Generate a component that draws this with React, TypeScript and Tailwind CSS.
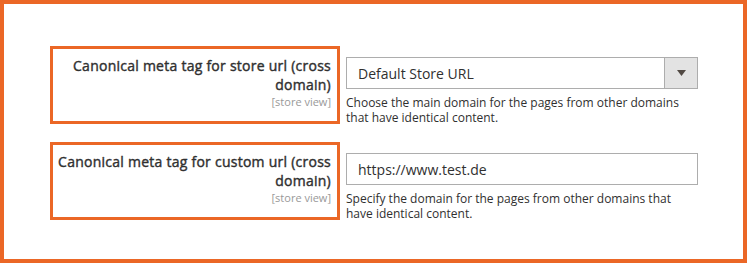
import type { ReactNode } from "react";

const FONT = { fontFamily: '"Open Sans", "Noto Sans", sans-serif' };

function LabelBox({ title }: { title: string }) {
  return (
    <div className="w-[290px] shrink-0 border-[3px] border-[#eb6726] pt-[8px] pb-[12px] pr-[6px] text-right">
      <div className="text-[14px] leading-[18.5px] tracking-[0.25px] text-[#303030] [-webkit-text-stroke:0.4px_#303030]">{title}</div>
      <div className="mt-[1px] text-[11px] leading-[14px] text-[#999999]">[store view]</div>
    </div>
  );
}

function Row({ title, control, help }: { title: string; control: ReactNode; help: string }) {
  return (
    <div className="flex items-start gap-[6px]">
      <LabelBox title={title} />
      <div className="w-[352px] pt-[11px]">
        {control}
        <p className="mt-[6px] text-[12px] leading-[15px] text-[#303030]">{help}</p>
      </div>
    </div>
  );
}

export default function App() {
  return (
    <div style={FONT} className="h-[263px] w-[747px] border-4 border-[#eb6726] bg-white pt-[42px] pl-[46px]">
      <div className="flex flex-col gap-[17px]">
        <Row
          title="Canonical meta tag for store url (cross domain)"
          control={
            <div className="flex h-[32px] border border-[#adadad] bg-white">
              <div className="flex flex-1 items-center px-[11px] text-[14px] text-[#303030]">Default Store URL</div>
              <div className="flex w-[33px] items-center justify-center border-l border-[#adadad] bg-[#e3e3e3]">
                <svg width="9" height="6" viewBox="0 0 9 6">
                  <path d="M0 0 H9 L4.5 6 Z" fill="#514943" />
                </svg>
              </div>
            </div>
          }
          help="Choose the main domain for the pages from other domains that have identical content."
        />
        <Row
          title="Canonical meta tag for custom url (cross domain)"
          control={
            <div className="flex h-[32px] items-center border border-[#adadad] bg-white px-[11px] text-[14px] text-[#303030]">
              https://www.test.de
            </div>
          }
          help="Specify the domain for the pages from other domains that have identical content."
        />
      </div>
    </div>
  );
}
